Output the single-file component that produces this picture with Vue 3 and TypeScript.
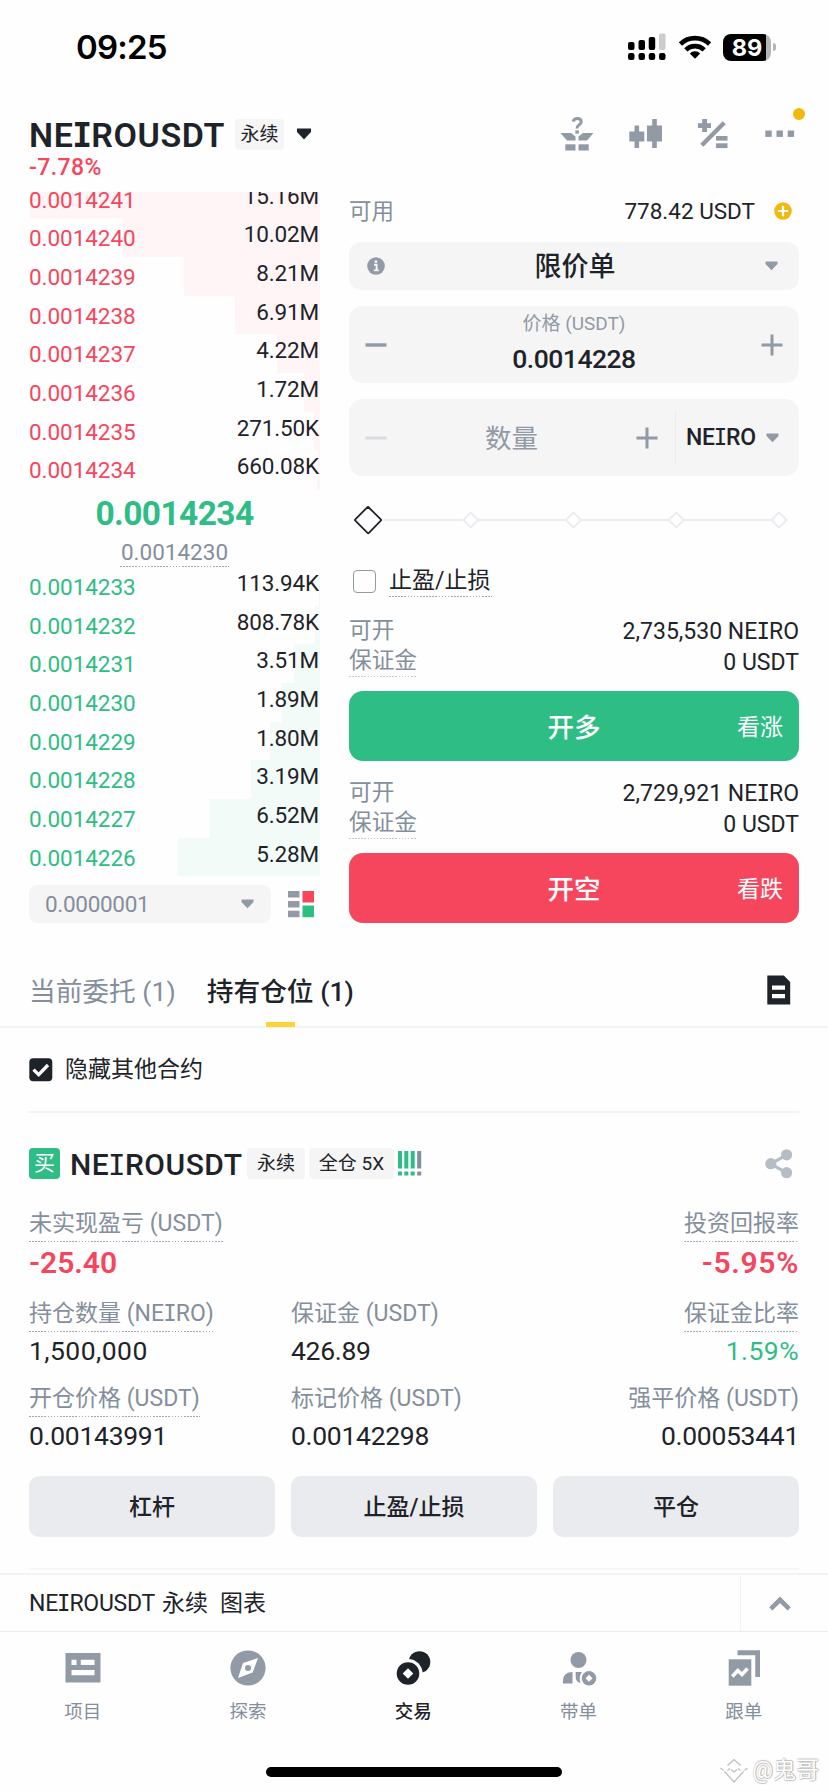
<script setup lang="ts">
interface Level {
  price: string
  size: string
  depth: number
}

const asks: Level[] = [
  { price: '0.0014241', size: '15.16M', depth: 290 },
  { price: '0.0014240', size: '10.02M', depth: 197 },
  { price: '0.0014239', size: '8.21M', depth: 136 },
  { price: '0.0014238', size: '6.91M', depth: 85 },
  { price: '0.0014237', size: '4.22M', depth: 43 },
  { price: '0.0014236', size: '1.72M', depth: 16 },
  { price: '0.0014235', size: '271.50K', depth: 6 },
  { price: '0.0014234', size: '660.08K', depth: 3 },
]

const bids: Level[] = [
  { price: '0.0014233', size: '113.94K', depth: 1 },
  { price: '0.0014232', size: '808.78K', depth: 5 },
  { price: '0.0014231', size: '3.51M', depth: 26 },
  { price: '0.0014230', size: '1.89M', depth: 38 },
  { price: '0.0014229', size: '1.80M', depth: 50 },
  { price: '0.0014228', size: '3.19M', depth: 69 },
  { price: '0.0014227', size: '6.52M', depth: 110 },
  { price: '0.0014226', size: '5.28M', depth: 142 },
]

const sides = [
  { key: 'long', max: '2,735,530', label: '开多', hint: '看涨' },
  { key: 'short', max: '2,729,921', label: '开空', hint: '看跌' },
]

const actions = ['杠杆', '止盈/止损', '平仓']
</script>

<template>
  <div class="screen">
    <div class="status">
      <span class="clock">09:25</span>
      <div class="status-icons">
        <svg width="38" height="28" viewBox="0 0 38 28">
          <rect x="0" y="9" width="6.5" height="8" rx="2" />
          <rect x="10.5" y="7" width="6.5" height="10" rx="2" />
          <rect x="20.7" y="4" width="6.5" height="13" rx="2" />
          <rect x="31" y="0.5" width="6.5" height="16.5" rx="2" fill="#ccc" />
          <rect x="0" y="20" width="6.5" height="7" rx="2.2" />
          <rect x="10.5" y="20" width="6.5" height="7" rx="2.2" />
          <rect x="20.7" y="20" width="6.5" height="7" rx="2.2" />
          <rect x="31" y="20" width="6.5" height="7" rx="2.2" />
        </svg>
        <svg class="wifi" width="34" height="26" viewBox="0 0 34 26">
          <g fill="none" stroke="#000" stroke-width="4.6">
            <path d="M2.4 10 A21.2 21.2 0 0 1 31.6 10" />
            <path d="M7.8 15.8 A13.4 13.4 0 0 1 26.2 15.8" />
          </g>
          <path d="M11.8 19.4 A7.4 7.4 0 0 1 22.2 19.4 L17 24.8 Z" />
        </svg>
        <div class="battery"><span>89</span></div>
        <i class="nub"></i>
      </div>
    </div>

    <header class="head">
      <div class="head-left">
        <div class="pair">
          <span class="pair-name">NE<span class="cap-i">I</span>ROUSDT</span>
          <span class="chip">永续</span>
          <svg class="pair-caret" width="16" height="12" viewBox="0 0 16 12"><path d="M1 0.5h14v3.5L8 11.5 1 4z" fill="#1e2329" /></svg>
        </div>
        <div class="change">-7.78%</div>
      </div>
      <div class="tools">
        <svg width="34" height="36" viewBox="0 0 34 36" fill="#929aa5">
          <path d="M13 5.6 Q14 2.4 17.4 2.4 Q21.2 2.4 21.2 5.8 Q21.2 7.8 19 9 Q17.1 10 17.1 12.6" fill="none" stroke="#929aa5" stroke-width="3" />
          <rect x="15.3" y="14.4" width="3.6" height="3.2" />
          <path d="M0.5 17H11L15.5 20.5V24.5H7z" />
          <path d="M33.5 17H23L18.5 20.5V24.5H27z" />
          <rect x="5.3" y="28.3" width="10.2" height="6.2" />
          <rect x="18.5" y="28.3" width="10.2" height="6.2" />
        </svg>
        <svg width="34" height="36" viewBox="0 0 34 36" fill="#929aa5">
          <rect x="0.3" y="15.5" width="15" height="10" />
          <rect x="5.5" y="9.5" width="4.6" height="22.5" />
          <rect x="18" y="9.5" width="15" height="16" />
          <rect x="23.2" y="3" width="4.6" height="29" />
        </svg>
        <svg width="32" height="36" viewBox="0 0 32 36" fill="#929aa5">
          <rect x="0" y="7.2" width="13" height="4.8" />
          <rect x="4.2" y="3" width="4.8" height="13" />
          <path d="M3.8 29.3 L26.2 6.8" stroke="#929aa5" stroke-width="4.4" />
          <rect x="18" y="20" width="11.5" height="4.6" />
          <rect x="18" y="27.3" width="11.5" height="4.8" />
        </svg>
        <div class="more">
          <svg width="30" height="36" viewBox="0 0 30 36" fill="#929aa5">
            <rect x="0.3" y="14.5" width="6.4" height="6.4" />
            <rect x="11.5" y="14.5" width="6.4" height="6.4" />
            <rect x="22.7" y="14.5" width="6.4" height="6.4" />
          </svg>
          <i class="badge"></i>
        </div>
      </div>
    </header>

    <main class="trade">
      <section class="book">
        <div class="asks">
          <div v-for="l in asks" :key="l.price" class="level">
            <i class="depth" :style="{ width: l.depth + 'px' }"></i>
            <span class="px">{{ l.price }}</span><span class="qty">{{ l.size }}</span>
          </div>
        </div>
        <div class="mid">
          <div class="last">0.0014234</div>
          <div class="mark dotted">0.0014230</div>
        </div>
        <div class="bids">
          <div v-for="l in bids" :key="l.price" class="level">
            <i class="depth" :style="{ width: l.depth + 'px' }"></i>
            <span class="px">{{ l.price }}</span><span class="qty">{{ l.size }}</span>
          </div>
        </div>
        <div class="book-foot">
          <div class="precision">
            <span>0.0000001</span>
            <svg class="caret" width="13" height="10" viewBox="0 0 13 10"><path d="M.5 .5h12v2.5L6.5 9.3.5 3z" /></svg>
          </div>
          <svg width="27" height="27" viewBox="0 0 27 27">
            <g fill="#929aa5"><rect y="0" width="11.5" height="6.5" /><rect y="10" width="11.5" height="6.5" /><rect y="19.7" width="11.5" height="6.5" /></g>
            <rect x="14.5" width="11.5" height="11.5" fill="#f6465d" />
            <rect x="14.5" y="14.5" width="11.5" height="11.7" fill="#2ebd85" />
          </svg>
        </div>
      </section>

      <section class="form">
        <div class="avail">
          <span class="muted">可用</span>
          <span class="avail-val">778.42 USDT</span>
          <svg width="18" height="18" viewBox="0 0 18 18"><circle cx="9" cy="9" r="8.8" fill="#f0b90b" /><path d="M9 3.8v10.4M3.8 9h10.4" stroke="#fff" stroke-width="2.2" /></svg>
        </div>
        <div class="box type">
          <svg width="18" height="18" viewBox="0 0 18 18"><circle cx="9" cy="9" r="8.8" fill="#929aa5" /><path d="M7 7.8h2.6v5.8M6.8 13.4h5" fill="none" stroke="#f5f5f5" stroke-width="1.9" /><rect x="7.7" y="3.4" width="2.4" height="2.4" fill="#f5f5f5" /></svg>
          <span class="type-name">限价单</span>
          <svg class="caret" width="13" height="10" viewBox="0 0 13 10"><path d="M.5 .5h12v2.5L6.5 9.3.5 3z" /></svg>
        </div>
        <div class="box price">
          <svg width="22" height="22" viewBox="0 0 22 22"><path d="M.5 11h21" stroke="#929aa5" stroke-width="3.4" /></svg>
          <div class="price-mid">
            <span class="price-label">价格 (USDT)</span>
            <span class="price-val">0.0014228</span>
          </div>
          <svg width="22" height="22" viewBox="0 0 22 22"><path d="M.5 11h21M11 .5v21" stroke="#929aa5" stroke-width="3" /></svg>
        </div>
        <div class="box amount">
          <svg width="22" height="22" viewBox="0 0 22 22"><path d="M.5 11h21" stroke="#d9dce1" stroke-width="3.2" /></svg>
          <span class="placeholder">数量</span>
          <svg width="22" height="22" viewBox="0 0 22 22"><path d="M.5 11h21M11 .5v21" stroke="#929aa5" stroke-width="3" /></svg>
          <i class="vline"></i>
          <span class="unit">NE<span class="cap-i">I</span>RO</span>
          <svg class="caret" width="13" height="10" viewBox="0 0 13 10"><path d="M.5 .5h12v2.5L6.5 9.3.5 3z" /></svg>
        </div>
        <svg class="slider" width="450" height="30" viewBox="0 0 450 30" fill="#fff">
          <path d="M34 15H422" stroke="#eaecef" stroke-width="1.8" />
          <path d="M19.2 2L31.8 14.3Q32.5 15 31.8 15.7L19.9 27.9Q19.2 28.6 18.5 27.9L6.3 15.7Q5.6 15 6.3 14.3L18.5 2.1Z" stroke="#1e2329" stroke-width="1.8" />
          <path v-for="x in [121.7, 224.5, 327.3, 430]" :key="x" :d="`M${x} 7.5l7.5 7.5-7.5 7.5-7.5-7.5z`" stroke="#eaecef" stroke-width="1.9" stroke-linejoin="round" />
        </svg>
        <div class="tpsl">
          <i class="checkbox"></i>
          <span class="dotted">止盈/止损</span>
        </div>
        <template v-for="s in sides" :key="s.key">
          <div class="info">
            <div class="info-labels"><span>可开</span><span class="dotted soft">保证金</span></div>
            <div class="info-vals"><span>{{ s.max }} NE<span class="cap-i">I</span>RO</span><span>0 USDT</span></div>
          </div>
          <button class="submit" :class="s.key"><span></span><span>{{ s.label }}</span><small>{{ s.hint }}</small></button>
        </template>
      </section>
    </main>

    <nav class="tabs">
      <span class="tab">当前委托 (1)</span>
      <span class="tab active">持有仓位 (1)</span>
      <svg width="24" height="30" viewBox="0 0 24 30"><path d="M.3 .5H16.8L23.2 7V29.5H.3z" fill="#1e2329" /><path d="M5 10.6h13v4.2H5zM5 19h13v4.2H5z" fill="#fff" /></svg>
    </nav>

    <div class="filter">
      <svg width="24" height="24" viewBox="0 0 24 24"><rect x=".3" y=".3" width="23" height="23" rx="4" fill="#1e2329" /><path d="M4.5 11.6L9.7 16.6 19 7" fill="none" stroke="#fff" stroke-width="3.3" /></svg>
      <span>隐藏其他合约</span>
    </div>

    <section class="position">
      <div class="pos-head">
        <span class="buy">买</span>
        <span class="pos-name">NE<span class="cap-i">I</span>ROUSDT</span>
        <span class="chip wide">永续</span>
        <span class="chip wide cross">全仓 5X</span>
        <svg width="24" height="25" viewBox="0 0 24 25">
          <g fill="#2ebd85"><path d="M0 0h4v17.5H0zM0 20.5h4V24.5H0zM6.3 0h4v17.5h-4zM6.3 20.5h4V24.5h-4zM12.7 0h4v17.5h-4zM12.7 20.5h4V24.5h-4z" /></g>
          <path d="M19.2 0h4v17.5h-4zM19.2 20.5h4V24.5h-4z" fill="#848e9c" />
        </svg>
        <svg class="share" width="28" height="30" viewBox="0 0 28 30" fill="#b7bdc6">
          <path d="M21.6 5.8L5.8 14.8 21.6 23.8" fill="none" stroke="#b7bdc6" stroke-width="3.2" />
          <circle cx="5.8" cy="14.7" r="5.6" /><circle cx="21.6" cy="5.8" r="5.6" /><circle cx="21.6" cy="23.7" r="5.6" />
        </svg>
      </div>
      <div class="stats first">
        <div class="stat"><span class="lbl dotted">未实现盈亏 (USDT)</span><b class="big">-25.40</b></div>
        <div class="stat"></div>
        <div class="stat"><span class="lbl dotted">投资回报率</span><b class="big spaced">-5.95%</b></div>
      </div>
      <div class="stats second">
        <div class="stat"><span class="lbl dotted">持仓数量 (NE<span class="cap-i">I</span>RO)</span><span class="val spaced">1,500,000</span></div>
        <div class="stat"><span class="lbl">保证金 (USDT)</span><span class="val">426.89</span></div>
        <div class="stat"><span class="lbl dotted">保证金比率</span><span class="val up spaced">1.59%</span></div>
      </div>
      <div class="stats third">
        <div class="stat"><span class="lbl dotted">开仓价格 (USDT)</span><span class="val">0.00143991</span></div>
        <div class="stat"><span class="lbl">标记价格 (USDT)</span><span class="val">0.00142298</span></div>
        <div class="stat"><span class="lbl">强平价格 (USDT)</span><span class="val">0.00053441</span></div>
      </div>
      <div class="actions"><button v-for="a in actions" :key="a">{{ a }}</button></div>
    </section>

    <div class="chartbar">
      <span class="chart-name">NE<span class="cap-i">I</span>ROUSDT</span>
      <span class="chart-kind">永续</span>
      <span class="chart-word">图表</span>
      <div class="expand"><svg width="22" height="16" viewBox="0 0 22 16"><path d="M1.8 12.8L11 3.8 20.2 12.8" fill="none" stroke="#929aa5" stroke-width="4.6" /></svg></div>
    </div>

    <footer class="nav">
      <div class="item">
        <svg width="36" height="36" viewBox="0 0 36 36"><path d="M.5 3h35v29.5H.5z" fill="#929aa5" /><path d="M6.5 9.8h5v5.2h-5zM15.8 9.8H29.5v5.2H15.8zM6.5 20h23v5.2h-23z" fill="#fff" /></svg>
        <span>项目</span>
      </div>
      <div class="item">
        <svg width="36" height="36" viewBox="0 0 36 36"><circle cx="18" cy="18" r="17.6" fill="#929aa5" /><path d="M28 8L22.7 22.5 8 28 13 13z" fill="#fff" /><circle cx="18" cy="18" r="3" fill="#929aa5" /></svg>
        <span>探索</span>
      </div>
      <div class="item on">
        <svg width="36" height="36" viewBox="0 0 36 36"><circle cx="24.5" cy="12" r="10.8" fill="#1e2329" /><circle cx="13" cy="23.5" r="14.6" fill="#fefefe" /><circle cx="13" cy="23.5" r="11.3" fill="#1e2329" /><path d="M13 18.2l5.3 5.3-5.3 5.3-5.3-5.3z" fill="#fff" /></svg>
        <span>交易</span>
      </div>
      <div class="item">
        <svg width="36" height="36" viewBox="0 0 36 36" fill="#929aa5"><circle cx="17.5" cy="10" r="8" /><path d="M2 33.5V31C2 25 6 22 11.5 22V33.5zM14.7 22H21C18.5 25 18 29 19.5 33C16.5 32.5 14.7 30 14.7 27z" /><circle cx="28" cy="28.3" r="7.2" /><path d="M28 24.8l3.5 3.5-3.5 3.5-3.5-3.5z" fill="#fff" /></svg>
        <span>带单</span>
      </div>
      <div class="item">
        <svg width="36" height="36" viewBox="0 0 36 36" fill="#929aa5"><path d="M11.5 .3H34V27H29.3V5.2H11.5z" /><path d="M2.7 9.3H25.3V35.7H2.7z" /><path d="M6.3 26.5L11.8 20.5 16 24.5 21.5 18.5" fill="none" stroke="#fff" stroke-width="3.6" /></svg>
        <span>跟单</span>
      </div>
    </footer>

    <div class="home"></div>
    <div class="sign">
      <svg width="30" height="26" viewBox="0 0 30 26" fill="none" stroke="#bdbdbd" stroke-width="1.2"><path d="M8.5 7.5L15 1.5 21.5 7.5M1.5 10L4.5 12.5M28.5 10L25.5 12.5M8.5 12.5L11 10.5M21.5 12.5L19 10.5M12 11.5L15 14 18 11.5M5.5 13.5L15 24 24.5 13.5" /></svg>
      <span>@鬼哥</span>
    </div>
  </div>
</template>

<style>
body {
  background: #fff;
}
</style>

<style scoped>
.screen {
  position: relative;
  width: 828px;
  height: 1792px;
  overflow: hidden;
  display: flex;
  flex-direction: column;
  background: #fefefe;
  color: #1e2329;
  font-family: Roboto, "Noto Sans CJK SC", sans-serif;
  font-size: 23px;
  line-height: 30px;
  white-space: nowrap;
}
.screen * {
  box-sizing: border-box;
}
svg {
  display: block;
  flex: none;
}
button {
  font: inherit;
  color: inherit;
  border: 0;
  padding: 0;
}
/* Serifed capital I inside the ticker names */
.cap-i {
  font-family: "DejaVu Sans Mono", monospace;
  font-size: 0.97em;
  line-height: 1;
  margin: 0 -0.04em;
}
.caret {
  fill: #929aa5;
}
.muted {
  color: #848e9c;
}
.dotted {
  background: repeating-linear-gradient(90deg, #a3aab5 0 1.6px, transparent 1.6px 3.1px) 0 100% / 100% 1.5px no-repeat;
}
.dotted.soft {
  background-image: repeating-linear-gradient(90deg, #c5c9d1 0 1.6px, transparent 1.6px 3.1px);
}

.status {
  height: 94px;
  display: flex;
  justify-content: space-between;
  align-items: center;
  padding: 0 52px 0 76px;
}
.clock {
  font: 600 33px/40px Inter, sans-serif;
  color: #000;
  letter-spacing: -0.8px;
}
.status-icons {
  display: flex;
  align-items: center;
}
.wifi {
  margin: 0 11px 0 12px;
}
.battery {
  width: 48px;
  height: 27px;
  border-radius: 8px;
  background: linear-gradient(90deg, #000 43px, #b5b5b5 43px);
  color: #fff;
  font: 700 23.5px/27px Inter, sans-serif;
  text-align: center;
}
.nub {
  width: 3px;
  height: 8px;
  margin-left: 2px;
  border-radius: 0 3px 3px 0;
  background: #b5b5b5;
}

.head {
  height: 98px;
  display: flex;
  justify-content: space-between;
  padding: 20px 33px 0 29px;
}
.pair {
  display: flex;
  align-items: center;
  height: 40px;
}
.pair-name {
  width: 206px;
  font-size: 34px;
  line-height: 40px;
  font-weight: 600;
  letter-spacing: 0.6px;
  padding-top: 1px;
}
.chip {
  width: 49px;
  height: 31px;
  border-radius: 4px;
  background: #f5f5f5;
  text-align: center;
  font-size: 19px;
  line-height: 31px;
}
.pair-caret {
  margin-left: 12px;
}
.change {
  color: #f6465d;
  font-weight: 500;
  font-size: 23px;
  line-height: 28px;
  letter-spacing: 0.4px;
}
.tools {
  display: flex;
  height: 40px;
  align-items: center;
  gap: 35px;
}
.more {
  position: relative;
}
.badge {
  position: absolute;
  left: 28px;
  top: -8px;
  width: 12px;
  height: 12px;
  border-radius: 50%;
  background: #f0b90b;
}

.trade {
  display: flex;
  justify-content: space-between;
  height: 758px;
  padding: 0 29px 0 29px;
}
.book {
  width: 291px;
  display: flex;
  flex-direction: column;
}
.asks {
  height: 297px;
  overflow: hidden;
  display: flex;
  flex-direction: column;
  justify-content: flex-end;
}
.level {
  position: relative;
  flex: none;
  height: 38.67px;
  display: flex;
  justify-content: space-between;
  font-size: 22.5px;
  line-height: 38.67px;
  padding: 0 1px 0 0;
}
.depth {
  position: absolute;
  right: 0;
  top: 0;
  bottom: 0;
  background: #fff5f6;
}
.bids .depth {
  background: #f2fbf7;
}
.px {
  position: relative;
  top: 1px;
  color: #f6465d;
  letter-spacing: -0.05px;
}
.bids .px {
  color: #2ebd85;
}
.qty {
  position: relative;
  top: -3px;
  letter-spacing: -0.15px;
}
.mid {
  height: 78px;
  display: flex;
  flex-direction: column;
  align-items: center;
}
.last {
  font-size: 33.5px;
  font-weight: 700;
  line-height: 40px;
  margin-top: 5px;
  color: #2ebd85;
  letter-spacing: -0.6px;
}
.mark {
  font-size: 22.5px;
  line-height: 30px;
  height: 34px;
  margin-top: 3px;
  color: #848e9c;
  padding: 0 1px;
}
.book-foot {
  display: flex;
  align-items: center;
  justify-content: space-between;
  margin-top: 9px;
  padding-right: 5px;
}
.precision {
  width: 242px;
  height: 38px;
  border-radius: 8px;
  background: #f5f5f5;
  display: flex;
  align-items: center;
  justify-content: space-between;
  padding: 0 17px 0 16px;
  color: #848e9c;
  font-size: 22.5px;
  letter-spacing: -0.3px;
}

.form {
  width: 450px;
  display: flex;
  flex-direction: column;
}
.avail {
  height: 38px;
  display: flex;
  align-items: center;
  padding-right: 7px;
  font-size: 22.5px;
}
.avail-val {
  margin-left: auto;
  margin-right: 19px;
}
.box {
  flex: none;
  display: flex;
  align-items: center;
  justify-content: space-between;
  background: #f5f5f5;
}
.type {
  height: 48px;
  margin-top: 12px;
  border-radius: 12px;
  padding: 0 21px 0 18px;
  font-size: 27px;
  font-weight: 500;
}
.type-name {
  padding-top: 2px;
}
.price {
  height: 77px;
  margin-top: 16px;
  border-radius: 14px;
  padding: 0 16px;
}
.price-mid {
  display: flex;
  flex-direction: column;
  align-items: center;
  height: 71px;
}
.price-label {
  font-size: 19px;
  line-height: 30px;
  color: #929aa5;
}
.price-val {
  font-size: 26.5px;
  font-weight: 500;
  line-height: 32px;
  margin-top: 4px;
  letter-spacing: -0.5px;
}
.amount {
  height: 77px;
  margin-top: 16px;
  border-radius: 14px;
  padding: 0 20px 0 16px;
}
.placeholder {
  margin: 0 auto;
  padding-top: 2px;
  font-size: 26.5px;
  color: #929aa5;
}
.vline {
  width: 1px;
  height: 54px;
  margin: 0 10px 0 17px;
  background: #eaecef;
}
.unit {
  font-weight: 500;
  font-size: 23px;
  letter-spacing: -0.3px;
  width: 70px;
  margin-right: 10px;
  padding-top: 1px;
}
.slider {
  margin-top: 29px;
}
.tpsl {
  height: 34px;
  margin-top: 29px;
  display: flex;
  align-items: center;
  padding-left: 4px;
  font-size: 23px;
}
.tpsl .dotted {
  margin-left: 13px;
  height: 32px;
  line-height: 30px;
  width: 103px;
  padding-top: 1px;
}
.checkbox {
  width: 23px;
  height: 23px;
  border: 1.5px solid #929aa5;
  border-radius: 4px;
}
.info {
  height: 75px;
  margin-top: 18px;
  display: flex;
  justify-content: space-between;
}
.info-labels,
.info-vals {
  display: flex;
  flex-direction: column;
}
.info-labels {
  color: #848e9c;
  align-items: flex-start;
  font-size: 22.7px;
}
.info-labels .dotted {
  height: 31px;
  line-height: 29px;
}
.info-vals {
  align-items: flex-end;
  line-height: 31px;
}
.submit {
  flex: none;
  height: 70px;
  border-radius: 14px;
  color: #fff;
  display: grid;
  grid-template-columns: 1fr auto 1fr;
  align-items: center;
  padding: 3px 16px 0;
  font-size: 26.5px;
  font-weight: 500;
}
.submit small {
  text-align: right;
  font-size: 23px;
  font-weight: 400;
}
.long {
  background: #2ebd85;
}
.short {
  background: #f6465d;
}
.long + .info {
  margin-top: 17px;
}

.tabs {
  height: 78px;
  border-bottom: 2px solid #f2f3f5;
  display: flex;
  align-items: center;
  padding: 8px 37px 0 29px;
  font-size: 26.7px;
}
.tabs svg {
  margin-left: auto;
  margin-bottom: 4px;
}
.tab {
  height: 68px;
  line-height: 68px;
  color: #848e9c;
}
.tab.active {
  position: relative;
  margin-left: 31px;
  color: #1e2329;
  font-weight: 500;
}
.tab.active::after {
  content: "";
  position: absolute;
  left: 50%;
  bottom: -1px;
  width: 29px;
  height: 5px;
  margin-left: -14px;
  background: #fcd535;
}
.filter {
  height: 85px;
  margin: 0 29px;
  border-bottom: 2px solid #f2f3f5;
  display: flex;
  align-items: center;
  gap: 12px;
}

.position {
  height: 457px;
  margin: 0 29px;
  padding-top: 35px;
  border-bottom: 2px solid #f7f7f8;
}
.pos-head {
  display: flex;
  align-items: center;
  height: 31px;
}
.buy {
  width: 31px;
  height: 31px;
  border-radius: 4px;
  background: #2ebd85;
  color: #fff;
  text-align: center;
  font-size: 21px;
  line-height: 30px;
}
.pos-name {
  width: 177px;
  margin-left: 10px;
  font-size: 30px;
  line-height: 36px;
  font-weight: 500;
  letter-spacing: 0.5px;
  padding-top: 2px;
}
.chip.wide {
  width: 58px;
}
.chip.cross {
  width: 85px;
  margin: 0 4px;
}
.share {
  margin-left: auto;
  margin-right: 6px;
}
.stats {
  display: grid;
  grid-template-columns: 262px 1fr 1fr;
}
.stat {
  display: flex;
  flex-direction: column;
  align-items: flex-start;
}
.stat:last-child {
  align-items: flex-end;
}
.first {
  height: 86px;
  margin-top: 30px;
}
.second,
.third {
  height: 85px;
}
.second {
  margin-top: 4px;
}
.lbl {
  height: 33px;
  line-height: 29px;
  color: #848e9c;
}
.big {
  font-size: 30px;
  line-height: 36px;
  margin-top: 3px;
  color: #f6465d;
  font-weight: 600;
}
.big.spaced {
  letter-spacing: 0.7px;
}
.val {
  font-size: 26.5px;
  line-height: 32px;
  margin-top: 3px;
  letter-spacing: -0.3px;
}
.val.spaced {
  letter-spacing: 0.45px;
}
.up {
  color: #2ebd85;
}
.actions {
  display: grid;
  grid-template-columns: repeat(3, 1fr);
  gap: 16px;
  margin-top: 7px;
}
.actions button {
  height: 61px;
  border-radius: 10px;
  background: #eaebef;
  font-weight: 500;
  padding-top: 2px;
}

.chartbar {
  height: 59px;
  margin-top: 3px;
  border-top: 2px solid #f2f3f5;
  border-bottom: 1px solid #eaecef;
  display: flex;
  align-items: center;
  padding: 1px 0 0 29px;
}
.chart-name {
  width: 133px;
  letter-spacing: -0.25px;
}
.chart-word {
  margin-left: 12px;
}
.expand {
  width: 88px;
  height: 100%;
  margin-left: auto;
  border-left: 1px solid #f2f3f5;
  display: grid;
  place-items: center;
  padding-right: 10px;
}

.nav {
  display: grid;
  grid-template-columns: repeat(5, 165.3px);
  padding-top: 18px;
  height: 100px;
}
.item {
  display: flex;
  flex-direction: column;
  align-items: center;
  color: #848e9c;
  font-size: 18.5px;
}
.item span {
  margin-top: 11px;
}
.item.on {
  color: #1e2329;
  font-weight: 500;
}
.home {
  width: 296px;
  height: 10px;
  margin: 35px auto 0;
  border-radius: 5px;
  background: #000;
}
.sign {
  position: absolute;
  right: 9px;
  bottom: 6px;
  display: flex;
  align-items: center;
  gap: 3px;
  font-size: 23px;
  color: #fff;
  text-shadow: 1px 0 1px #b0b0b0, 0 -1px 1px #c4c4c4, 0 1px 1px #c4c4c4;
}
</style>
